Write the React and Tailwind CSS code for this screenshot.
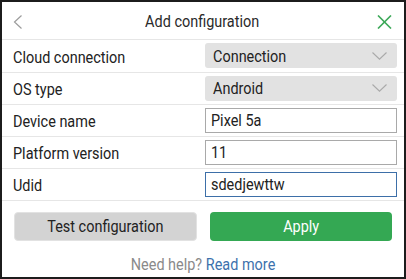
// Reference text is horizontally narrow, so text spans get a small x-squeeze
const rows = [
  { label: 'Cloud connection', kind: 'select', value: 'Connection' },
  { label: 'OS type', kind: 'select', value: 'Android' },
  { label: 'Device name', kind: 'input', value: 'Pixel 5a' },
  { label: 'Platform version', kind: 'input', value: '11' },
  { label: 'Udid', kind: 'input', value: 'sdedjewttw', focused: true },
];

const Narrow = ({ children, center = false, className = '' }) => (
  <span
    className={`inline-block whitespace-nowrap scale-x-[0.85] ${center ? 'origin-center' : 'origin-left'} ${className}`}
  >
    {children}
  </span>
);

const Field = ({ row }) => {
  if (row.kind === 'select') {
    return (
      <div className="w-[192px] h-[25px] bg-[#e2e2e2] rounded-[3px] flex items-center justify-between pl-[8px] pr-[10px]">
        <Narrow className="translate-y-[1px]">{row.value}</Narrow>
        <svg width="15" height="8" viewBox="0 0 15 8" fill="none" stroke="#a9a9a9" strokeWidth="1.1">
          <polyline points="0.5,0.5 7.5,7.2 14.5,0.5" />
        </svg>
      </div>
    );
  }
  return (
    <div
      className={`w-[192px] h-[25px] bg-white flex items-center pl-[5px] border-[1.5px] ${
        row.focused ? 'border-[#3d6fa8]' : 'border-[#a9a9a9]'
      }`}
    >
      <Narrow className="translate-y-[1px]">{row.value}</Narrow>
    </div>
  );
};

export default function App() {
  return (
    <div
      className="w-[406px] h-[279px] bg-white border-2 border-[#1c1c1c] flex flex-col text-[17px] text-[#222]"
      style={{ fontFamily: 'Roboto, "Liberation Sans", sans-serif' }}
    >
      <div className="h-[41px] flex items-center justify-between pl-[11px] pr-[12px] pt-[3px] border-b border-[#e6e6e6]">
        <svg width="10" height="14" viewBox="0 0 10 14" fill="none" stroke="#9c9c9c" strokeWidth="1.2">
          <polyline points="8.5,0.5 1.5,7 8.5,13.5" />
        </svg>
        <h1 className="text-[17px] text-[#2a2a2a] leading-none pl-[4px]">
          <Narrow center>Add configuration</Narrow>
        </h1>
        <svg width="15" height="14" viewBox="0 0 15 14" fill="none" stroke="#3aa757" strokeWidth="1.6">
          <line x1="1" y1="0.5" x2="14" y2="13.5" />
          <line x1="14" y1="0.5" x2="1" y2="13.5" />
        </svg>
      </div>
      <div className="flex flex-col">
        {rows.map((row, i) => (
          <div
            key={row.label}
            className={`flex items-center justify-between pl-[11px] pr-[7px] border-b border-[#e6e6e6] ${
              i === 0 ? 'h-[33px]' : 'h-[32px]'
            }`}
          >
            <Narrow className="translate-y-[2px]">{row.label}</Narrow>
            <Field row={row} />
          </div>
        ))}
      </div>
      <div className="flex gap-[13px] px-[12px] mt-[11px]">
        <button className="w-[184px] h-[29px] rounded-[4px] bg-[#d3d3d3] border border-[#e2e2e2] text-[#222] flex items-center justify-center">
          <Narrow center className="translate-y-[1px]">Test configuration</Narrow>
        </button>
        <button className="w-[184px] h-[29px] rounded-[4px] bg-[#34a853] text-white flex items-center justify-center">
          <Narrow center className="translate-y-[1px]">Apply</Narrow>
        </button>
      </div>
      <p className="mt-[11px] text-center text-[#8a8a8a]">
        <Narrow center>
          Need help? <span className="text-[#3d72ad]">Read more</span>
        </Narrow>
      </p>
    </div>
  );
}
